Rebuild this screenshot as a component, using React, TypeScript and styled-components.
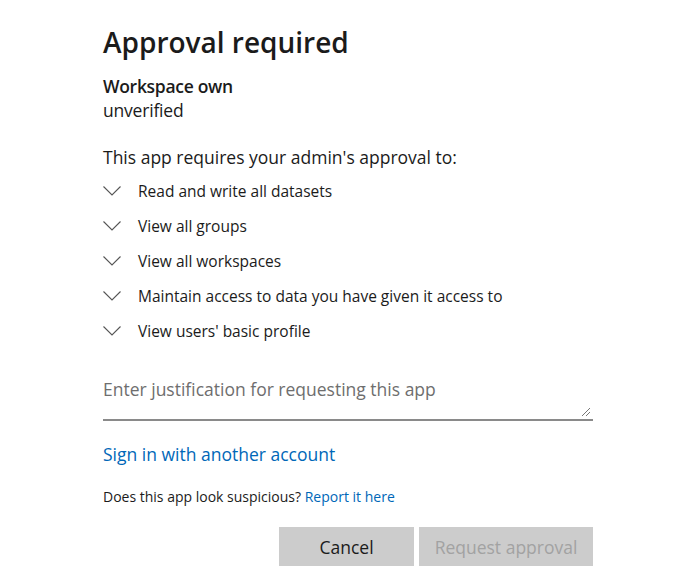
import React from "react";
import styled, { createGlobalStyle } from "styled-components";

const Global = createGlobalStyle`
  html, body { margin: 0; padding: 0; background: #fff; }
  body { font-family: "Open Sans", "Noto Sans", sans-serif; color: #1b1b1b; }
`;

const Page = styled.div`
  width: 674px;
  height: 588px;
  box-sizing: border-box;
  padding: 24px 0 0 103px;
`;

const Dialog = styled.div`
  width: 490px;
  display: flex;
  flex-direction: column;
`;

const Title = styled.h1`
  margin: 0;
  font-size: 28px;
  font-weight: 600;
  line-height: 36px;
  color: #1b1b1b;
`;

const Owner = styled.div`
  margin-top: 14px;
  font-size: 17.5px;
  font-weight: 600;
  line-height: 24px;
  letter-spacing: -0.3px;
`;

const Status = styled.div`
  font-size: 17.5px;
  line-height: 24px;
  letter-spacing: -0.2px;
`;

const Intro = styled.div`
  margin-top: 23px;
  font-size: 17.5px;
  line-height: 24px;
`;

const List = styled.ul`
  list-style: none;
  margin: 10px 0 0;
  padding: 0;
  display: flex;
  flex-direction: column;
  gap: 11px;
`;

const Item = styled.li`
  display: flex;
  align-items: center;
  gap: 17px;
  height: 24px;
  font-size: 15.5px;
  color: #1b1b1b;
`;

const Chevron = styled.svg`
  width: 18px;
  height: 10px;
  flex: none;
`;

const Field = styled.div`
  margin-top: 30px;
  position: relative;
  border-bottom: 2px solid #8a8a8a;
  height: 46px;
`;

const Area = styled.textarea`
  width: 100%;
  height: 100%;
  box-sizing: border-box;
  border: none;
  outline: none;
  resize: none;
  padding: 4px 0 0;
  font-family: "Open Sans", "Noto Sans", sans-serif;
  font-size: 17.5px;
  line-height: 24px;
  color: #1b1b1b;
  &::placeholder { color: #6e6e6e; }
`;

const Grip = styled.svg`
  position: absolute;
  right: 2px;
  bottom: 2px;
  width: 10px;
  height: 10px;
`;

const Link = styled.a`
  margin-top: 21px;
  font-size: 17.5px;
  line-height: 24px;
  color: #0067b8;
  text-decoration: none;
`;

const Small = styled.div`
  margin-top: 23px;
  font-size: 14px;
  line-height: 16px;
  color: #1b1b1b;
`;

const InlineLink = styled.a`
  color: #0067b8;
  text-decoration: none;
`;

const Actions = styled.div`
  margin-top: 22px;
  display: flex;
  justify-content: flex-end;
  gap: 5px;
`;

const Button = styled.button<{ $disabled?: boolean }>`
  height: 39px;
  width: ${(p) => (p.$disabled ? "174px" : "135px")};
  border: none;
  background: #cccccc;
  font-family: "Open Sans", "Noto Sans", sans-serif;
  font-size: 17.5px;
  color: ${(p) => (p.$disabled ? "#a2a2a2" : "#1b1b1b")};
  padding: 0;
`;

const permissions = [
  "Read and write all datasets",
  "View all groups",
  "View all workspaces",
  "Maintain access to data you have given it access to",
  "View users' basic profile",
];

export default function App() {
  return (
    <Page>
      <Global />
      <Dialog>
        <Title>Approval required</Title>
        <Owner>Workspace own</Owner>
        <Status>unverified</Status>
        <Intro>This app requires your admin's approval to:</Intro>
        <List>
          {permissions.map((p) => (
            <Item key={p}>
              <Chevron viewBox="0 0 18 10">
                <path d="M0.5 0.5 L9 9 L17.5 0.5" fill="none" stroke="#555" strokeWidth="1.1" />
              </Chevron>
              {p}
            </Item>
          ))}
        </List>
        <Field>
          <Area placeholder="Enter justification for requesting this app" />
          <Grip viewBox="0 0 10 10">
            <path d="M9 1 L1 9 M9 5 L5 9" stroke="#777" strokeWidth="1" />
          </Grip>
        </Field>
        <Link href="#">Sign in with another account</Link>
        <Small>
          Does this app look suspicious? <InlineLink href="#">Report it here</InlineLink>
        </Small>
        <Actions>
          <Button>Cancel</Button>
          <Button $disabled disabled>Request approval</Button>
        </Actions>
      </Dialog>
    </Page>
  );
}
